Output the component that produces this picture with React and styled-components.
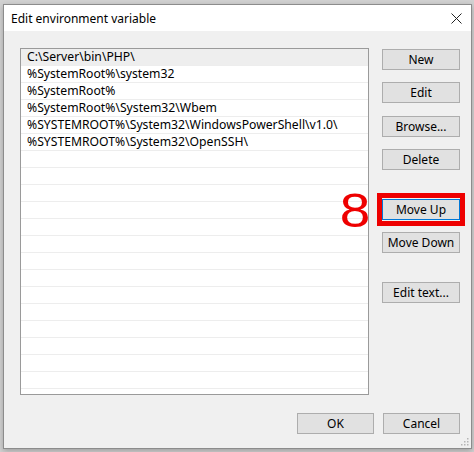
import React from 'react';
import styled, { createGlobalStyle } from 'styled-components';

const GlobalStyle = createGlobalStyle`
  html, body {
    margin: 0;
    padding: 0;
    background: #d2d2d2;
  }
  body {
    font-family: "Noto Sans", "Open Sans", sans-serif;
  }
`;

const Page = styled.div`
  width: 474px;
  height: 452px;
  padding-top: 4px;
  padding-left: 3px;
  box-sizing: border-box;
  overflow: hidden;
`;

const Window = styled.div`
  display: flex;
  flex-direction: column;
  width: 469px;
  height: 445px;
  box-sizing: border-box;
  border: 1px solid #8c8c8c;
  background: #f0f0f0;
  box-shadow: 0 2px 6px rgba(0, 0, 0, 0.25);
  position: relative;
`;

const TitleBar = styled.div`
  display: flex;
  align-items: center;
  justify-content: space-between;
  height: 26px;
  padding: 0 9px 0 7px;
  background: #ffffff;
  font-size: 12px;
  color: #000;
`;

const Body = styled.div`
  display: flex;
  flex-direction: column;
  flex: 1;
  padding: 17px 11px 0 16px;
`;

const Main = styled.div`
  display: flex;
`;

const List = styled.div`
  width: 349px;
  height: 347px;
  box-sizing: border-box;
  border: 1px solid #9a9a9a;
  background: #ffffff;
  overflow: hidden;
`;

const Row = styled.div`
  height: 16px;
  border-bottom: 1px solid #ededed;
  padding-left: 6px;
  font-size: 12.2px;
  line-height: 16px;
  color: #000;
  white-space: nowrap;
  background: ${(p) => (p.$selected ? '#eeeeee' : '#ffffff')};
`;

const Side = styled.div`
  display: flex;
  flex-direction: column;
  margin-left: 13px;
  padding-top: 1px;
`;

const Button = styled.button`
  width: ${(p) => p.$width || 78}px;
  height: 21px;
  box-sizing: border-box;
  margin-top: ${(p) => p.$gap || 0}px;
  padding: 0;
  border: 1px solid ${(p) => (p.$focused ? '#0078d7' : '#adadad')};
  background: #e1e1e1;
  font-family: inherit;
  font-size: 12px;
  color: #000;
  position: relative;
`;

const Highlight = styled.div`
  position: absolute;
  left: -6px;
  top: -7px;
  right: -6px;
  bottom: -7px;
  border: 5px solid #ee0000;
  pointer-events: none;
`;

const Marker = styled.div`
  position: absolute;
  right: calc(100% + 13px);
  top: -18px;
  font-family: "Liberation Sans", Arial, sans-serif;
  font-size: 49px;
  line-height: 56px;
  color: #ee0000;
  transform: scaleX(1.12);
  transform-origin: right center;
`;

const Footer = styled.div`
  display: flex;
  justify-content: flex-end;
  gap: 9px;
  margin-top: 18px;
`;

const Grip = styled.svg`
  position: absolute;
  right: 2px;
  bottom: 2px;
`;

const items = [
  'C:\\Server\\bin\\PHP\\',
  '%SystemRoot%\\system32',
  '%SystemRoot%',
  '%SystemRoot%\\System32\\Wbem',
  '%SYSTEMROOT%\\System32\\WindowsPowerShell\\v1.0\\',
  '%SYSTEMROOT%\\System32\\OpenSSH\\',
];

const App = () => {
  const rows = [...items, ...Array(15).fill('')];
  return (
    <Page>
      <GlobalStyle />
      <Window>
        <TitleBar>
          <span>Edit environment variable</span>
          <svg width="11" height="11" viewBox="0 0 11 11">
            <path d="M0.5 0.5 L10.5 10.5 M10.5 0.5 L0.5 10.5" stroke="#222" strokeWidth="1" fill="none" />
          </svg>
        </TitleBar>
        <Body>
          <Main>
            <List>
              {rows.map((text, i) => (
                <Row key={i} $selected={i === 0}>{text}</Row>
              ))}
            </List>
            <Side>
              <Button>New</Button>
              <Button $gap={12}>Edit</Button>
              <Button $gap={13}>Browse...</Button>
              <Button $gap={12}>Delete</Button>
              <Button $gap={29} $focused>
                Move Up
                <Highlight />
                <Marker>8</Marker>
              </Button>
              <Button $gap={12}>Move Down</Button>
              <Button $gap={29}>Edit text...</Button>
            </Side>
          </Main>
          <Footer>
            <Button $width={77}>OK</Button>
            <Button $width={77}>Cancel</Button>
          </Footer>
        </Body>
        <Grip width="9" height="9" viewBox="0 0 9 9">
          {[[7, 1], [4, 4], [7, 4], [1, 7], [4, 7], [7, 7]].map(([x, y], i) => (
            <rect key={i} x={x} y={y} width="1.5" height="1.5" fill="#b5b5b5" />
          ))}
        </Grip>
      </Window>
    </Page>
  );
};

export default App;
